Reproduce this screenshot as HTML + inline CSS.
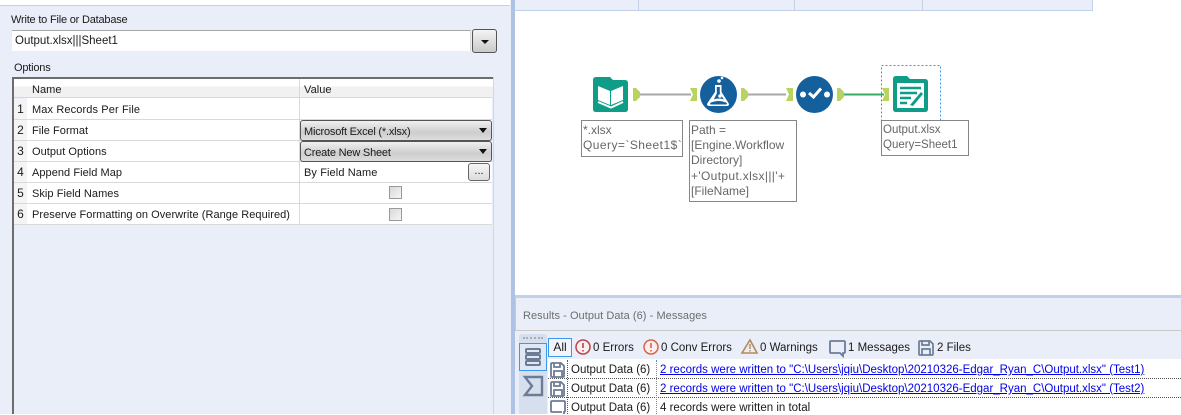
<!DOCTYPE html>
<html><head><meta charset="utf-8">
<style>
html,body{margin:0;padding:0;width:1181px;height:414px;overflow:hidden;background:#fff;font-family:"Liberation Sans",sans-serif;font-size:11px;color:#1a1a1a}
.a{position:absolute}
.t{position:absolute;white-space:nowrap;line-height:14px;letter-spacing:.05px;transform:translateY(1px)}
.r{font-size:11.5px;letter-spacing:0}
.line{position:absolute;background:#d9d9d9}
.box{position:absolute;border:1px solid #868686;background:#fff;box-sizing:border-box;padding:2px 0 0 1px;color:#666;font-size:12px;line-height:15.200px;white-space:nowrap}
.sel{position:absolute;left:300px;width:192px;height:21px;box-sizing:border-box;border:1px solid #555;border-radius:3px;background:linear-gradient(#f0f0f0,#cdcdcd 60%,#dedede);padding:4px 0 0 3px;font-size:11px;letter-spacing:-.2px;line-height:14px;white-space:nowrap}
.sel:after{content:"";position:absolute;right:4px;top:7px;border:4px solid transparent;border-top:5px solid #111;border-bottom:0}
.chk{position:absolute;left:389px;width:13px;height:13px;box-sizing:border-box;border:1px solid #999;background:linear-gradient(135deg,#d8d8d8,#f6f6f6)}
.n{position:absolute;left:14px;width:13px;text-align:center;background:#f4f4f4;font-size:12px;line-height:20px;height:20px}
.lnk{color:#0000ee;text-decoration:underline}
.dot{position:absolute;height:0;border-top:1px dotted #555}
</style></head><body>

<!-- left panel -->
<div class="a" style="left:0;top:0;width:511px;height:414px;background:#e9eef8"></div>
<div class="a" style="left:0;top:0;width:510px;height:5px;background:#fff;border-bottom:1px solid #cfcfcf"></div>
<div class="a" style="left:511px;top:0;width:4px;height:414px;background:#aec3e3"></div>

<div class="t" style="left:11px;top:12px;letter-spacing:-.2px">Write to File or Database</div>
<div class="a" style="left:12px;top:30px;width:459px;height:21px;background:#fff;border-top:1px solid #a8a8a8;border-right:1px solid #ddd;box-sizing:border-box"></div>
<div class="t" style="left:15px;top:33px;font-size:11.5px;letter-spacing:0">Output.xlsx|||Sheet1</div>
<div class="a" style="left:472px;top:29px;width:25px;height:24px;box-sizing:border-box;border:1px solid #555;border-radius:3px;background:linear-gradient(#f4f4f4,#c9c9c9)"></div>
<div class="a" style="left:481px;top:40px;border:4px solid transparent;border-top:4px solid #111;border-bottom:0"></div>
<div class="t" style="left:14px;top:60px;letter-spacing:-.2px">Options</div>

<!-- grid -->
<div class="a" style="left:12px;top:77px;width:2px;height:337px;background:#6d6d6d"></div>
<div class="a" style="left:12px;top:77px;width:481px;height:2px;background:#6d6d6d"></div>
<div class="a" style="left:493px;top:77px;width:1px;height:337px;background:#d6d6d6"></div>
<div class="a" style="left:14px;top:79px;width:479px;height:19px;background:linear-gradient(#fff 40%,#f1f1f1 40%)"></div>
<div class="a" style="left:27px;top:98px;width:465px;height:126px;background:#fff"></div>
<div class="line" style="left:14px;top:97px;width:478px;height:1px"></div>
<div class="line" style="left:14px;top:119px;width:478px;height:1px"></div>
<div class="line" style="left:14px;top:140px;width:478px;height:1px"></div>
<div class="line" style="left:14px;top:161px;width:478px;height:1px"></div>
<div class="line" style="left:14px;top:182px;width:478px;height:1px"></div>
<div class="line" style="left:14px;top:203px;width:478px;height:1px"></div>
<div class="line" style="left:14px;top:224px;width:478px;height:1px"></div>
<div class="line" style="left:299px;top:79px;width:1px;height:146px"></div>

<div class="n" style="top:99px">1</div><div class="n" style="top:120px">2</div><div class="n" style="top:141px">3</div><div class="n" style="top:162px">4</div><div class="n" style="top:183px">5</div><div class="n" style="top:204px">6</div>

<div class="t" style="left:32px;top:82px">Name</div>
<div class="t" style="left:304px;top:82px">Value</div>
<div class="t" style="left:32px;top:102px;letter-spacing:.12px">Max Records Per File</div>
<div class="t" style="left:32px;top:123px">File Format</div>
<div class="t" style="left:32px;top:144px">Output Options</div>
<div class="t" style="left:32px;top:165px">Append Field Map</div>
<div class="t" style="left:32px;top:186px">Skip Field Names</div>
<div class="t" style="left:32px;top:207px">Preserve Formatting on Overwrite (Range Required)</div>

<div class="sel" style="top:120px">Microsoft Excel (*.xlsx)</div>
<div class="sel" style="top:141px">Create New Sheet</div>
<div class="t" style="left:304px;top:165px;letter-spacing:.1px">By Field Name</div>
<div class="a" style="left:468px;top:163px;width:22px;height:18px;box-sizing:border-box;border:1px solid #666;border-radius:3px;background:linear-gradient(#f6f6f6,#dcdcdc);text-align:center;font-size:11px;line-height:15px">...</div>
<div class="chk" style="top:186px"></div>
<div class="chk" style="top:208px"></div>

<!-- top bar right -->
<div class="a" style="left:515px;top:0;width:577px;height:10px;background:#e9eef8;border-bottom:1px solid #c3d1e8;border-right:1px solid #c3d1e8"></div>
<div class="a" style="left:638px;top:0;width:1px;height:10px;background:#c3d1e8"></div>
<div class="a" style="left:794px;top:0;width:1px;height:10px;background:#c3d1e8"></div>
<div class="a" style="left:922px;top:0;width:1px;height:10px;background:#c3d1e8"></div>

<!-- canvas -->
<svg class="a" style="left:515px;top:11px" width="666" height="285" viewBox="515 11 666 285" xmlns="http://www.w3.org/2000/svg">
  <!-- connectors -->
  <line x1="640" y1="94.500" x2="691" y2="94.500" stroke="#a8a8a8" stroke-width="2"/>
  <line x1="748" y1="94.500" x2="786" y2="94.500" stroke="#a8a8a8" stroke-width="2"/>
  <line x1="843" y1="94.500" x2="884" y2="94.500" stroke="#3cab62" stroke-width="2"/>
  <!-- anchors -->
  <g fill="#b9d45e">
    <path d="M633 88h3l4 4v5l-4 4h-3z"/>
    <path d="M690 88h7v13h-7l3-6.500z"/>
    <path d="M741 88h3l4 4v5l-4 4h-3z"/>
    <path d="M786 88h7v13h-7l3-6.500z"/>
    <path d="M837 88h3l4 4v5l-4 4h-3z"/>
    <path d="M882 88h7v13h-7l3-6.500z"/>
  </g>
  <!-- input tool -->
  <path d="M593 80q0-3 3-3h14l3 3h12q3 0 3 3v26q0 3-3 3h-29q-3 0-3-3z" fill="#0f9d88"/>
  <path d="M598 86l12 5v14l-12-5zM623 86l-12 5v14l12-5z" fill="#fff"/>
  <path d="M598 102l13 5.500 12-5.500" fill="none" stroke="#fff" stroke-width="2"/>
  <!-- formula tool -->
  <circle cx="718.500" cy="94.500" r="18.500" fill="#14609c"/>
  <path d="M715 85h6.500v7l7 11q1.500 3-2 3h-17q-3.500 0-2-3l7.500-11z" fill="#fff"/>
  <path d="M716.800 87h3v6l4 6.500q-5-2-10 0l3-6z" fill="#14609c"/>
  <path d="M710 103q8.500-4 17 0l-.5 1.500h-16z" fill="#14609c"/>
  <circle cx="720" cy="96" r="1.800" fill="#fff"/>
  <circle cx="719" cy="81" r="1.800" fill="#fff"/><circle cx="722" cy="78" r="1.300" fill="#fff"/>
  <!-- dynamic rename tool -->
  <circle cx="814.500" cy="94.500" r="18.500" fill="#14609c"/>
  <circle cx="803" cy="94.500" r="3" fill="#fff"/><circle cx="827" cy="94.500" r="3" fill="#fff"/>
  <path d="M809 93l4.500 4 7.500-8.500" fill="none" stroke="#fff" stroke-width="3"/>
  <!-- output tool -->
  <rect x="881.500" y="65.500" width="59" height="55" fill="none" stroke="#3b97f0" stroke-width="1" stroke-dasharray="2 2"/>
  <path d="M893 79q0-3 3-3h11l3 3h15q3 0 3 3v27q0 3-3 3h-29q-3 0-3-3z" fill="#0f9d88"/>
  <rect x="897" y="83" width="27" height="25" fill="#fff"/>
  <path d="M900 88h21M900 93h17M900 98h11M900 103h7" stroke="#0f9d88" stroke-width="2.400" fill="none"/>
  <path d="M910 105l11-13 2 2-10 12z" fill="#0f9d88"/>
</svg>

<div class="box" style="left:581px;top:120px;width:102px;height:37px">*.xlsx<br><span style="letter-spacing:.45px">Query=`Sheet1$`</span></div>
<div class="box" style="left:689px;top:120px;width:108px;height:82px">Path =<br>[Engine.Workflow<br>Directory]<br><span style="letter-spacing:.35px">+'Output.xlsx|||'+</span><br>[FileName]</div>
<div class="box" style="left:881px;top:120px;width:88px;height:36px;font-size:11.500px">Output.xlsx<br>Query=Sheet1</div>

<!-- results panel -->
<div class="a" style="left:515px;top:295px;width:666px;height:119px;background:#e9eef8"></div>
<div class="a" style="left:515px;top:295px;width:666px;height:3px;background:#c3d1e8"></div>
<div class="a" style="left:515px;top:330px;width:666px;height:1px;background:#c9c9c9"></div>
<div class="a" style="left:515px;top:298px;width:1px;height:33px;background:#c9c9c9"></div>
<div class="t" style="left:523px;top:308px;color:#6d6d6d">Results - Output Data (6) - Messages</div>

<!-- side tabs -->
<div class="a" style="left:519px;top:334px;width:28px;height:80px;background:#d6dfee;border-radius:3px 3px 0 0"></div>
<div class="a" style="left:523px;top:337px;width:20px;border-top:2px dotted #aab"></div>
<div class="a" style="left:519px;top:343px;width:28px;height:28px;box-sizing:border-box;border:1px solid #3b97f0;background:#dfe8f5"></div>
<svg class="a" style="left:519px;top:344px" width="28" height="70" viewBox="0 0 28 70">
  <g fill="none" stroke="#6c7c96" stroke-width="2">
    <rect x="7" y="5" width="14" height="4" rx="1"/><rect x="7" y="11" width="14" height="4" rx="1"/><rect x="7" y="17" width="14" height="4" rx="1"/>
    <path d="M23 33H6l7 9-7 9h17z" stroke-width="2.400"/>
  </g>
</svg>

<!-- toolbar -->
<div class="a" style="left:548px;top:338px;width:24px;height:19px;box-sizing:border-box;border:1px solid #3b97f0;background:#f2f6fc;text-align:center;line-height:17px;font-size:12px">All</div>
<svg class="a" style="left:575px;top:338px" width="410" height="20" viewBox="0 0 410 20">
  <circle cx="8" cy="9" r="7" fill="#fbeeee" stroke="#b8444c" stroke-width="1.500"/>
  <path d="M8 5v5M8 12v1.500" stroke="#b8444c" stroke-width="1.600"/>
  <circle cx="76" cy="9" r="7" fill="#fbeeee" stroke="#d8644c" stroke-width="1.500"/>
  <path d="M76 5v5M76 12v1.500" stroke="#d8644c" stroke-width="1.600"/>
  <path d="M175 2l7 13h-15z" fill="none" stroke="#b58a5a" stroke-width="1.600"/>
  <path d="M175 6v5M175 12v1.500" stroke="#b58a5a" stroke-width="1.400"/>
  <path d="M256 3h13q1 0 1 1v10q0 1-1 1h-1v3l-3-3h-9q-1 0-1-1V4q0-1 1-1z" fill="none" stroke="#6c7c96" stroke-width="1.800"/>
  <path d="M345 3h10l3 3v10q0 1-1 1h-12q-1 0-1-1V4q0-1 1-1zM347 3v4h7V3M347 17v-6h8v6" fill="none" stroke="#6c7c96" stroke-width="1.700"/>
</svg>
<div class="t r" style="left:593px;top:340px">0 Errors</div>
<div class="t r" style="left:661px;top:340px">0 Conv Errors</div>
<div class="t r" style="left:760px;top:340px">0 Warnings</div>
<div class="t r" style="left:848px;top:340px">1 Messages</div>
<div class="t r" style="left:937px;top:340px">2 Files</div>

<!-- results rows -->
<div class="a" style="left:548px;top:359px;width:633px;height:55px;background:#fff"></div>
<div class="dot" style="left:548px;top:378px;width:633px"></div>
<div class="dot" style="left:548px;top:397px;width:633px"></div>
<div class="a" style="left:567px;top:360px;height:54px;border-left:1px dotted #555"></div>
<div class="a" style="left:656px;top:360px;height:54px;border-left:1px dotted #5a8fd0"></div>
<svg class="a" style="left:548px;top:360px" width="20" height="54" viewBox="0 0 20 54">
  <g fill="none" stroke="#6c7c96" stroke-width="1.800">
    <path d="M4 3h9l3 3v10q0 1-1 1H4q-1 0-1-1V4q0-1 1-1zM6 3v4h6V3M6 17v-6h8v6"/>
    <path d="M4 22h9l3 3v10q0 1-1 1H4q-1 0-1-1V23q0-1 1-1zM6 22v4h6v-4M6 36v-6h8v6"/>
    <path d="M4 41h12q1 0 1 1v9q0 1-1 1v2M14 52H4q-1 0-1-1v-9q0-1 1-1"/>
  </g>
</svg>
<div class="t r" style="left:571px;top:362px">Output Data (6)</div>
<div class="t r" style="left:571px;top:381px">Output Data (6)</div>
<div class="t r" style="left:571px;top:400px">Output Data (6)</div>
<div class="t r lnk" style="left:660px;top:362px">2 records were written to "C:\Users\jqiu\Desktop\20210326-Edgar_Ryan_C\Output.xlsx" (Test1)</div>
<div class="t r lnk" style="left:660px;top:381px">2 records were written to "C:\Users\jqiu\Desktop\20210326-Edgar_Ryan_C\Output.xlsx" (Test2)</div>
<div class="t r" style="left:660px;top:400px">4 records were written in total</div>

</body></html>
